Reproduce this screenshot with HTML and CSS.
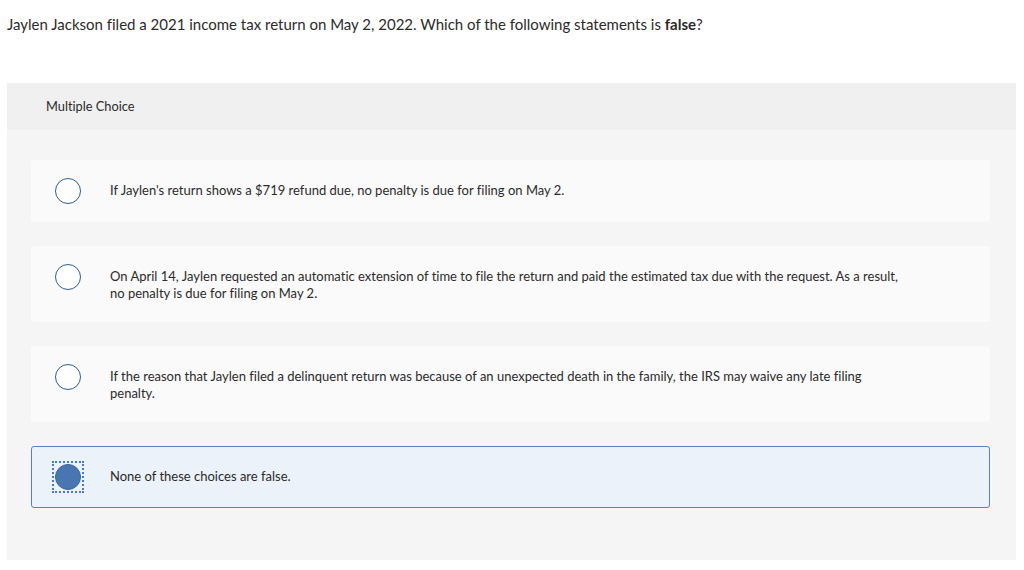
FILE: index.html
```html
<!DOCTYPE html>
<html lang="en">
<head>
  <meta charset="UTF-8">
  <title>Multiple Choice</title>
  <link rel="stylesheet" href="styles.css">
</head>
<body>

<p class="question">Jaylen Jackson filed a 2021 income tax return on May 2, 2022. Which of the following statements is <strong>false</strong>?</p>

<div class="mc">
  <div class="mc-head">Multiple Choice</div>
  <div class="mc-body">
    <label class="choice">
      <span class="radio-wrap"><span class="radio"></span></span>
      <span class="choice-text">If Jaylen's return shows a $719 refund due, no penalty is due for filing on May 2.</span>
    </label>
    <label class="choice">
      <span class="radio-wrap"><span class="radio"></span></span>
      <span class="choice-text">On April 14, Jaylen requested an automatic extension of time to file the return and paid the estimated tax due with the request. As a result, no penalty is due for filing on May 2.</span>
    </label>
    <label class="choice">
      <span class="radio-wrap"><span class="radio"></span></span>
      <span class="choice-text">If the reason that Jaylen filed a delinquent return was because of an unexpected death in the family, the IRS may waive any late filing penalty.</span>
    </label>
    <label class="choice selected">
      <span class="radio-wrap focus"><span class="radio checked"></span></span>
      <span class="choice-text">None of these choices are false.</span>
    </label>
  </div>
</div>

</body>
</html>
```

FILE: styles.css
```css
body { margin: 0; padding: 0 8px 0 7px; background: #fff; font-family: Lato, "Open Sans", sans-serif; color: #2b2b2b; font-variant-ligatures: none; }
.question { margin: 0; padding-top: 15px; font-size: 15px; line-height: 18px; height: 68px; }
.question strong { font-weight: 700; }
.mc { background: #f5f5f5; padding-bottom: 52px; }
.mc-head { background: #f0f0f0; height: 47px; line-height: 47px; padding-left: 39px; font-size: 12.8px; }
.mc-body { padding: 30px 26px 0 24px; display: flex; flex-direction: column; gap: 24px; }
.choice { display: flex; align-items: flex-start; background: #fafafa; border: 1px solid transparent; border-radius: 3px; padding: 14px 20px; font-size: 13px; line-height: 17px; }
.radio-wrap { flex: none; width: 26px; height: 26px; padding: 1px; border: 2px dotted transparent; margin-right: 26px; }
.radio-wrap.focus { border-color: #4a7cc9; }
.radio { display: block; width: 24px; height: 24px; border: 1px solid #2f5b92; border-radius: 50%; background: #fff; }
.choice-text { padding: 7px 0 5px; max-width: 795px; }
.choice.selected { background: #ecf2fa; border-color: #5a80bd; }
.radio.checked { background: #4a75b3; border-color: #3d6699; }
```
